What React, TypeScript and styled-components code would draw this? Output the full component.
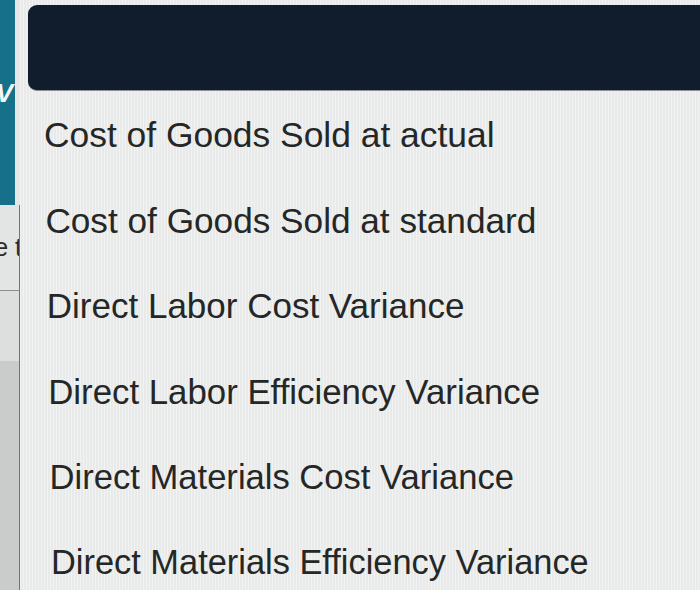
import React from "react";
import styled, { createGlobalStyle } from "styled-components";

const Global = createGlobalStyle`
  html, body { margin: 0; padding: 0; }
  body {
    width: 700px;
    height: 590px;
    overflow: hidden;
    background: #e7e9e8;
    font-family: "Liberation Sans", Arial, Helvetica, sans-serif;
  }
`;

const Page = styled.div`
  display: flex;
  width: 700px;
  height: 590px;
  overflow: hidden;
`;

const LeftStrip = styled.div`
  width: 20px;
  flex: 0 0 20px;
  display: flex;
  flex-direction: column;
`;

const TealBlock = styled.div`
  height: 205px;
  width: 20px;
  background: #17708a;
  border-right: 5px solid #e6e8e7;
  display: flex;
  justify-content: flex-end;
  align-items: flex-start;
  padding-top: 80px;
  box-sizing: border-box;
  overflow: hidden;
`;

const Glyph = styled.span`
  color: #f4f6f6;
  font-weight: 700;
  font-style: italic;
  font-size: 26px;
  line-height: 26px;
  margin-right: 2px;
`;

const Segment = styled.div<{ $h: number; $bg: string; $line?: boolean }>`
  height: ${(p) => p.$h}px;
  flex: ${(p) => (p.$h === 0 ? "1" : "none")};
  background: ${(p) => p.$bg};
  border-right: 1.5px solid #6f7372;
  border-bottom: ${(p) => (p.$line ? "1.5px solid #8a8e8c" : "none")};
  display: flex;
  justify-content: flex-end;
  align-items: flex-start;
  overflow: hidden;
  box-sizing: border-box;
`;

const CutText = styled.span`
  color: #2a2c2c;
  font-size: 25px;
  line-height: 25px;
  margin-top: 30px;
  margin-right: -3px;
  white-space: nowrap;
`;

const Panel = styled.div`
  flex: 1;
  display: flex;
  flex-direction: column;
  padding: 5px 0 0 8px;
  background: #e6e8e7;
  background-image: repeating-linear-gradient(
    90deg,
    rgba(255, 255, 255, 0.45) 0px,
    rgba(255, 255, 255, 0.45) 1px,
    rgba(255, 255, 255, 0.1) 1px,
    rgba(255, 255, 255, 0.1) 3px
  );
`;

const Header = styled.div`
  height: 85px;
  flex: none;
  background: #111d2d;
  border-radius: 9px 0 0 9px;
  border-bottom: 1px solid #8b8f92;
`;

const List = styled.ul`
  list-style: none;
  margin: 0;
  padding: 0;
  display: flex;
  flex-direction: column;
`;

const Item = styled.li<{ $indent: number; $size: number; $first?: boolean }>`
  height: 85.4px;
  margin-top: ${(p) => (p.$first ? "2px" : "0")};
  display: flex;
  align-items: center;
  padding-left: ${(p) => p.$indent}px;
  font-size: ${(p) => p.$size}px;
  color: #252727;
  white-space: nowrap;
`;

const items = [
  "Cost of Goods Sold at actual",
  "Cost of Goods Sold at standard",
  "Direct Labor Cost Variance",
  "Direct Labor Efficiency Variance",
  "Direct Materials Cost Variance",
  "Direct Materials Efficiency Variance",
];

export default function App() {
  return (
    <>
      <Global />
      <Page>
        <LeftStrip>
          <TealBlock>
            <Glyph>V</Glyph>
          </TealBlock>
          <Segment $h={86} $bg="#e3e5e4" $line>
            <CutText>e t</CutText>
          </Segment>
          <Segment $h={70} $bg="#dcdfdd" />
          <Segment $h={0} $bg="#c9cccb" />
        </LeftStrip>
        <Panel>
          <Header />
          <List>
            {items.map((t, i) => (
              <Item
                key={t}
                $first={i === 0}
                $indent={16 + i * 1.4}
                $size={35.4 - i * 0.2}
              >
                {t}
              </Item>
            ))}
          </List>
        </Panel>
      </Page>
    </>
  );
}
